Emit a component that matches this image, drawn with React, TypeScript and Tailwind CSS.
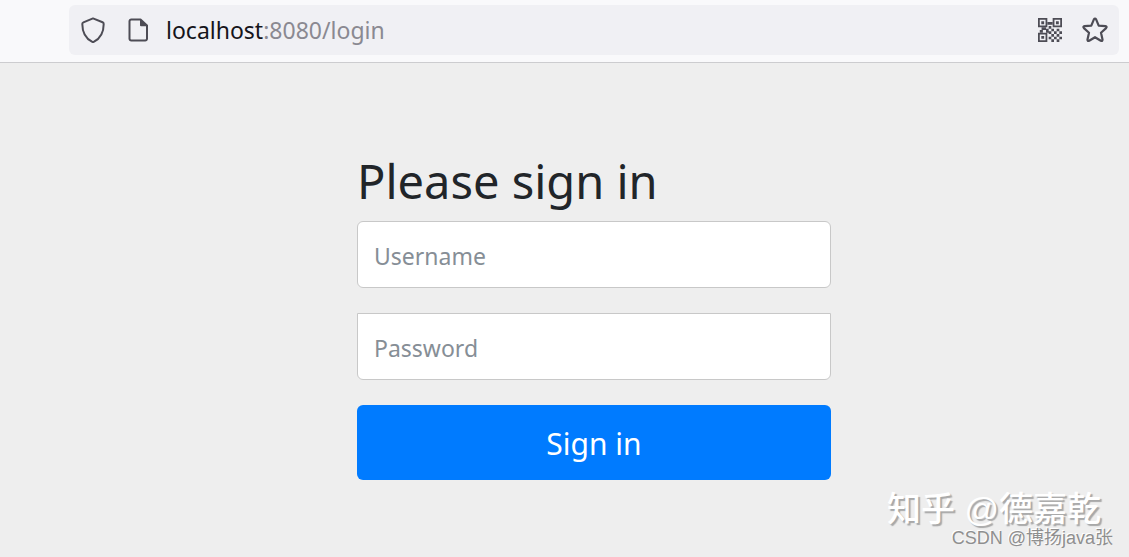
import React from "react";

function ShieldIcon() {
  return (
    <svg viewBox="0 0 24 26" className="h-[26px] w-6" fill="none" stroke="#4d4c55" strokeWidth="2" strokeLinejoin="round" aria-hidden="true">
      <path d="M12 1.4 21.6 5.3C22.3 5.6 22.7 6.2 22.7 6.9C22.7 15.6 19.4 21.4 12.7 24.9Q12 25.2 11.3 24.9C4.6 21.4 1.3 15.6 1.3 6.9C1.3 6.2 1.7 5.6 2.4 5.3Z" />
    </svg>
  );
}

function PageIcon() {
  return (
    <svg viewBox="0 0 20 24" className="h-6 w-5" aria-hidden="true">
      <path d="M12.5 1.500H3.300A1.800 1.800 0 0 0 1.500 3.300V20.700A1.800 1.800 0 0 0 3.300 22.500H17.200A1.800 1.800 0 0 0 19 20.700V7.600Z" fill="none" stroke="#4d4c55" strokeWidth="2" strokeLinejoin="round" />
      <path d="M12 .900V7.200A1 1 0 0 0 13 8.200H19.900Z" fill="#4d4c55" />
    </svg>
  );
}

function QrIcon() {
  return (
    <svg viewBox="0 0 27 27" className="size-6" fill="#4d4c55" aria-hidden="true">
      <path fillRule="evenodd" d="M0 0H10.500V10.500H0ZM2 2V8.500H8.500V2ZM16.500 0H27V10.500H16.500ZM18.500 2V8.500H25V2ZM0 16.500H10.500V27H0ZM2 18.500V25H8.500V18.500Z" />
      <path d="M3.700 3.700h3.200v3.200H3.700ZM20.200 3.700h3.200v3.200h-3.200ZM3.700 20.200h3.200v3.200H3.700ZM10.500 4.500h6v3h-6ZM4 10.500h5v3H4ZM2 13.500h3.500v3H2ZM9 12h3v4.500H9ZM12 9h3v3h-3ZM12 15h3v3h-3ZM15 12h3v3h-3ZM21 12h3v3h-3ZM18 15h3v3h-3ZM24 15h3v3h-3ZM15 18h3v3h-3ZM21 18h3v3h-3ZM12 21h3v3h-3ZM18 21h3v3h-3ZM24 21h3v3h-3ZM15 24h3v3h-3ZM21 24h3v3h-3Z" />
    </svg>
  );
}

function StarIcon() {
  return (
    <svg viewBox="0 0 26 26" className="size-[26px]" fill="none" stroke="#4d4c55" strokeWidth="2.200" strokeLinejoin="round" aria-hidden="true">
      <path d="M11.900 2.400Q13 .600 14.100 2.400L16.700 8.600 23.400 9.200Q25.400 9.600 24.100 11.100L19 15.700 20.500 22.400Q20.700 24.500 18.800 23.700L13 20.200 7.200 23.700Q5.300 24.500 5.500 22.400L7 15.700 1.900 11.100Q.600 9.600 2.600 9.200L9.300 8.600Z" />
    </svg>
  );
}

function AddressBar() {
  return (
    <header className="border-b border-[#cccccf] bg-[#f9f9fb] pt-[5px] pr-[10px] pb-[7px] pl-[69px]">
      <div className="flex h-[50px] items-center rounded-md bg-[#f0f0f4] pr-[11px] pl-3">
        <button type="button" aria-label="Tracking protection"><ShieldIcon /></button>
        <button type="button" aria-label="Site information" className="ml-[23px]"><PageIcon /></button>
        <p className="ml-[18px] flex-1 text-[23px] leading-8 text-[#8a8991]">
          <span className="text-[#15141a]">localhost</span>:8080/login
        </p>
        <button type="button" aria-label="QR code"><QrIcon /></button>
        <button type="button" aria-label="Bookmark" className="ml-5"><StarIcon /></button>
      </div>
    </header>
  );
}

const field =
  "block h-[67px] w-full border border-[#c8c8c8] bg-white px-4 pt-0.5 text-[23px] text-[#212529] placeholder:text-[#868e96] placeholder:opacity-100 outline-none focus:border-[#80bdff]";

export default function App() {
  return (
    <div className="relative flex min-h-screen flex-col bg-[#eeeeee] font-['Noto_Sans','Noto_Sans_CJK_SC',sans-serif]">
      <AddressBar />
      <main className="flex-1 pt-[88px] pl-[59px]">
        <form className="mx-auto w-full max-w-[474px]" onSubmit={(e) => e.preventDefault()}>
          <h1 className="mb-2.5 text-[47px] leading-[60px] text-[#212529]">Please sign in</h1>
          <input aria-label="Username" type="text" placeholder="Username" className={`${field} mb-[25px] rounded-md`} />
          <input aria-label="Password" type="password" placeholder="Password" className={`${field} mb-[25px] rounded-b-md`} />
          <button type="submit" className="h-[75px] w-full rounded-md bg-[#007bff] pt-0.5 text-3xl text-white">
            Sign in
          </button>
        </form>
      </main>
      <div className="pointer-events-none absolute right-4 bottom-2 text-right font-['Liberation_Sans','Noto_Sans_CJK_SC',sans-serif]">
        <p className="mr-3 text-[34px] leading-9 font-medium text-white [text-shadow:2px_2px_1px_#a8a8a8]">知乎 @德嘉乾</p>
        <p className="text-lg leading-[22px] text-[#8f8f8f] [text-shadow:-1px_-1px_0_#ffffff]">CSDN @博扬java张</p>
      </div>
    </div>
  );
}
